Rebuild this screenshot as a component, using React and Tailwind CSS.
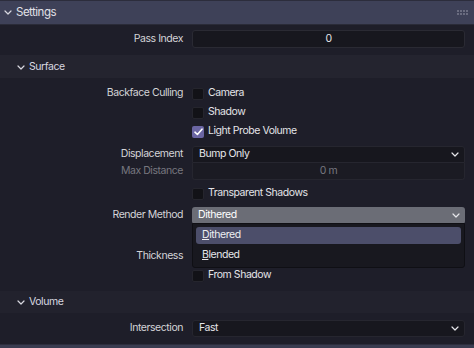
import React from "react";

const Chevron = ({ className = "" }) => (
  <svg width="8" height="5" viewBox="0 0 8 5" className={className} fill="none">
    <path d="M1 1L4 4L7 1" stroke="currentColor" strokeWidth="1.2" strokeLinecap="round" strokeLinejoin="round" />
  </svg>
);

const Label = ({ children, dim }) => (
  <div className={`w-[184px] shrink-0 text-right pr-[1px] ${dim ? "text-[#77777f]" : "text-[#d4d4d8]"}`}>{children}</div>
);

const Check = ({ checked, label }) => (
  <div className="flex items-center gap-[4px]">
    <div className={`w-[12px] h-[12px] rounded-[2px] flex items-center justify-center ${checked ? "bg-[#6b66a3]" : "bg-[#121217] border border-[#25252d]"}`}>
      {checked && (
        <svg width="9" height="8" viewBox="0 0 9 8" fill="none">
          <path d="M1 4.2L3.4 6.5L8 1.2" stroke="white" strokeWidth="1.6" strokeLinecap="round" strokeLinejoin="round" />
        </svg>
      )}
    </div>
    <span className="text-[#e4e4e8]">{label}</span>
  </div>
);

const Select = ({ value, active }) => (
  <div className={`w-[273px] h-[17px] rounded-[3px] flex items-center justify-between pl-[6px] pr-[5px] ${active ? "bg-[#6b6d76] text-white" : "bg-[#17171e] border border-[#26262f] text-[#e6e6ea]"}`}>
    <span>{value}</span>
    <Chevron className="text-[#e6e6ea]" />
  </div>
);

export default function App() {
  return (
    <div className="w-[474px] h-[348px] bg-[#1e1e29] overflow-hidden relative text-[10.5px] tracking-[-0.45px] leading-none" style={{ fontFamily: "Inter, 'Noto Sans', sans-serif" }}>
      {/* Settings header */}
      <div className="h-[25px] bg-[#3e4158] border-t border-[#2c2d3c] border-b border-b-[#2a2b38] flex items-center pl-[4px] pr-[6px] text-[11.5px] tracking-[-0.5px] text-[#e2e2e8]">
        <Chevron className="text-[#d8d8e0] mr-[4px]" />
        <span className="mt-[1px]">Settings</span>
        <div className="ml-auto grid grid-cols-4 gap-[1px]">
          {Array.from({ length: 8 }).map((_, i) => (
            <div key={i} className="w-[2px] h-[2px] bg-[#6a6c80]" />
          ))}
        </div>
      </div>

      <div className="pr-[9px]">
        {/* Pass Index */}
        <div className="flex items-center gap-[8px] mt-[5px] h-[18px]">
          <Label>Pass Index</Label>
          <div className="w-[273px] h-[18px] rounded-[3px] bg-[#17171e] border border-[#2a2a33] flex items-center justify-center text-[#e6e6ea]">0</div>
        </div>
      </div>

      {/* Surface header */}
      <div className="mt-[7px] h-[23px] bg-[#24242f] flex items-center pl-[17px] pt-[1px] text-[#d8d8e0]">
        <Chevron className="mr-[4px]" />
        <span>Surface</span>
      </div>

      <div className="pr-[9px] relative">
        <div className="flex items-center gap-[8px] mt-[6px] h-[19px]">
          <Label>Backface Culling</Label>
          <Check label="Camera" />
        </div>
        <div className="flex items-center gap-[8px] h-[19px]">
          <div className="w-[184px]" />
          <Check label="Shadow" />
        </div>
        <div className="flex items-center gap-[8px] h-[19px]">
          <div className="w-[184px]" />
          <Check checked label="Light Probe Volume" />
        </div>

        <div className="flex items-center gap-[8px] mt-[5px] h-[17px]">
          <Label>Displacement</Label>
          <div className="w-[273px] h-[17px] rounded-t-[3px] bg-[#17171e] border border-[#26262f] flex items-center justify-between pl-[6px] pr-[5px] text-[#e6e6ea]">
            <span>Bump Only</span>
            <Chevron />
          </div>
        </div>
        <div className="flex items-center gap-[8px] h-[17px]">
          <Label dim>Max Distance</Label>
          <div className="w-[273px] h-[17px] rounded-b-[3px] bg-[#1b1b23] border border-[#26262f] border-t-0 flex items-center justify-center text-[#77777f]">0 m</div>
        </div>

        <div className="flex items-center gap-[8px] mt-[4px] h-[19px]">
          <div className="w-[184px]" />
          <Check label="Transparent Shadows" />
        </div>

        <div className="flex items-center gap-[8px] mt-[4px] h-[17px]">
          <Label>Render Method</Label>
          <Select value="Dithered" active />
        </div>

        <div className="flex items-center gap-[8px] mt-[24px] h-[17px]">
          <Label>Thickness</Label>
          <div className="w-[273px] h-[17px] rounded-[3px] bg-[#17171e]" />
        </div>
        <div className="flex items-center gap-[8px] mt-[1px] h-[19px]">
          <div className="w-[184px]" />
          <Check label="From Shadow" />
        </div>

        {/* dropdown menu */}
        <div className="absolute left-[192px] top-[139px] w-[273px] h-[45px] bg-[#18181f] border border-[#0f0f14] rounded-b-[3px] px-[3px] pt-[3px] flex flex-col">
          <div className="h-[17px] rounded-[3px] bg-[#4c4e6a] flex items-center pl-[6px] text-[#eeeef2]">
            <span><span className="underline">D</span>ithered</span>
          </div>
          <div className="h-[22px] flex items-center pl-[6px] text-[#e6e6ea]">
            <span><span className="underline">B</span>lended</span>
          </div>
        </div>
      </div>

      {/* Volume header */}
      <div className="mt-[6px] h-[22px] bg-[#22222d] flex items-center pl-[17px] text-[#d8d8e0]">
        <Chevron className="mr-[4px]" />
        <span>Volume</span>
      </div>

      <div className="pr-[9px]">
        <div className="flex items-center gap-[8px] mt-[7px] h-[17px]">
          <Label>Intersection</Label>
          <Select value="Fast" />
        </div>
      </div>

      <div className="absolute left-0 right-0 bottom-0 h-[4px] bg-[#3a3c50] border-t border-[#2c2d3c]" />
    </div>
  );
}
